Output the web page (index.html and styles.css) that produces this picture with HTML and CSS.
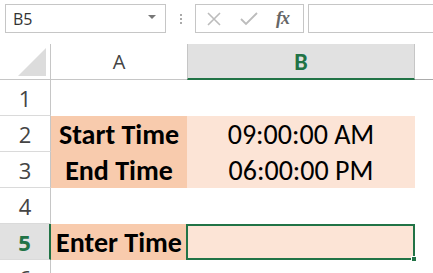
FILE: index.html
```html
<!DOCTYPE html>
<html lang="en">
<head>
  <meta charset="UTF-8">
  <meta name="viewport" content="width=device-width, initial-scale=1.0">
  <title>Enter Time</title>
  <link rel="stylesheet" href="styles.css">
</head>
<body>

  <div class="formula-bar">
    <div class="name-box">
      <span>B5</span>
      <span class="arrow"></span>
    </div>
    <div class="dots">
      <span></span><span></span><span></span>
    </div>
    <div class="buttons">
      <svg class="icon" width="16" height="16" viewBox="0 0 16 16">
        <path d="M2 2 L14 14 M14 2 L2 14" stroke="#bcbcbc" stroke-width="1.6" fill="none"/>
      </svg>
      <svg class="icon" width="18" height="14" viewBox="0 0 18 14">
        <path d="M1 7 L6 12 L17 1" stroke="#bcbcbc" stroke-width="1.8" fill="none"/>
      </svg>
      <span class="fx">fx</span>
    </div>
    <div class="formula-input"></div>
  </div>

  <div class="sheet">
    <!-- header row -->
    <div class="corner">
      <svg width="30" height="30" viewBox="0 0 30 30">
        <polygon points="29,1 29,29 1,29" fill="#dcdcdc"/>
      </svg>
    </div>
    <div class="col-head">A</div>
    <div class="col-head active">B</div>
    <div class="col-rest"></div>

    <!-- row 1 -->
    <div class="row-head">1</div>
    <div class="cell"></div>
    <div class="cell"></div>
    <div class="cell-rest"></div>

    <!-- row 2 -->
    <div class="row-head">2</div>
    <div class="cell label">Start Time</div>
    <div class="cell value">09:00:00 AM</div>
    <div class="cell-rest"></div>

    <!-- row 3 -->
    <div class="row-head">3</div>
    <div class="cell label">End Time</div>
    <div class="cell value">06:00:00 PM</div>
    <div class="cell-rest"></div>

    <!-- row 4 -->
    <div class="row-head">4</div>
    <div class="cell"></div>
    <div class="cell"></div>
    <div class="cell-rest"></div>

    <!-- row 5 -->
    <div class="row-head active">5</div>
    <div class="cell label">Enter Time</div>
    <div class="cell value selected"><span class="handle"></span></div>
    <div class="cell-rest"></div>

    <!-- row 6 -->
    <div class="row-head">6</div>
    <div class="cell"></div>
    <div class="cell"></div>
    <div class="cell-rest"></div>
  </div>

</body>
</html>
```

FILE: styles.css
```css
* {
  box-sizing: border-box;
}
body {
  margin: 0;
  background: #fff;
  font-family: "Open Sans", sans-serif;
  overflow: hidden;
}

/* formula bar */
.formula-bar {
  display: flex;
  align-items: center;
  height: 44px;
  padding: 0 0 7px 5px;
}
.name-box {
  width: 161px;
  height: 29px;
  border: 1px solid #c6c6c6;
  display: flex;
  align-items: center;
  justify-content: space-between;
  padding: 0 9px 0 7px;
  font-size: 16px;
  color: #333;
}
.arrow {
  width: 0;
  height: 0;
  border-left: 4px solid transparent;
  border-right: 4px solid transparent;
  border-top: 4px solid #777;
  margin-top: -4px;
}
.dots {
  display: flex;
  flex-direction: column;
  gap: 2px;
  margin: 0 13px 0 14px;
}
.dots span {
  width: 2px;
  height: 2px;
  background: #aaa;
}
.buttons {
  width: 109px;
  height: 29px;
  border: 1px solid #c6c6c6;
  display: flex;
  align-items: center;
  padding-left: 10px;
  gap: 0;
}
.buttons .icon:first-child {
  margin-right: 18px;
}
.buttons .icon:nth-child(2) {
  margin-right: 18px;
}
.fx {
  font-family: "Liberation Serif", serif;
  font-style: italic;
  font-weight: bold;
  font-size: 18px;
  color: #666;
  letter-spacing: -1px;
}
.formula-input {
  flex: 1;
  height: 29px;
  margin-left: 4px;
  border: 1px solid #c6c6c6;
  border-right: none;
}

/* sheet grid */
.sheet {
  display: grid;
  grid-template-columns: 51px 136px 228px 1fr;
  grid-template-rows: repeat(7, 36px);
}
.corner {
  border-right: 1px solid #c6c6c6;
  border-bottom: 1px solid #c6c6c6;
  display: flex;
  align-items: center;
  justify-content: flex-end;
  padding-right: 3px;
}
.col-head {
  border-bottom: 1px solid #c6c6c6;
  display: flex;
  align-items: center;
  justify-content: center;
  font-size: 20px;
  color: #444;
}
.col-head.active {
  background: #e1e1e1;
  border-left: 1px solid #c6c6c6;
  border-right: 1px solid #c6c6c6;
  border-bottom: 2px solid #217346;
  color: #217346;
  font-family: Carlito, Lato, sans-serif;
  font-weight: bold;
  font-size: 24px;
}
.col-rest {
  border-bottom: 1px solid #ababab;
}
.row-head {
  border-right: 1px solid #c6c6c6;
  border-bottom: 1px solid #dadada;
  display: flex;
  align-items: center;
  justify-content: center;
  font-size: 22px;
  color: #444;
}
.row-head.active {
  background: #e1e1e1;
  border-right: 2px solid #217346;
  color: #217346;
  font-weight: bold;
}
.cell {
  display: flex;
  align-items: center;
  justify-content: center;
  font-family: Carlito, Lato, sans-serif;
  font-size: 28px;
  color: #000;
}
.label {
  background: #f8cbad;
  font-weight: bold;
  white-space: nowrap;
}
.value {
  background: #fce4d6;
}
.selected {
  position: relative;
  border: 2px solid #217346;
  margin-left: -1px;
}
.handle {
  position: absolute;
  right: -4px;
  bottom: -4px;
  width: 6px;
  height: 6px;
  background: #217346;
  border: 1px solid #fff;
}
```
